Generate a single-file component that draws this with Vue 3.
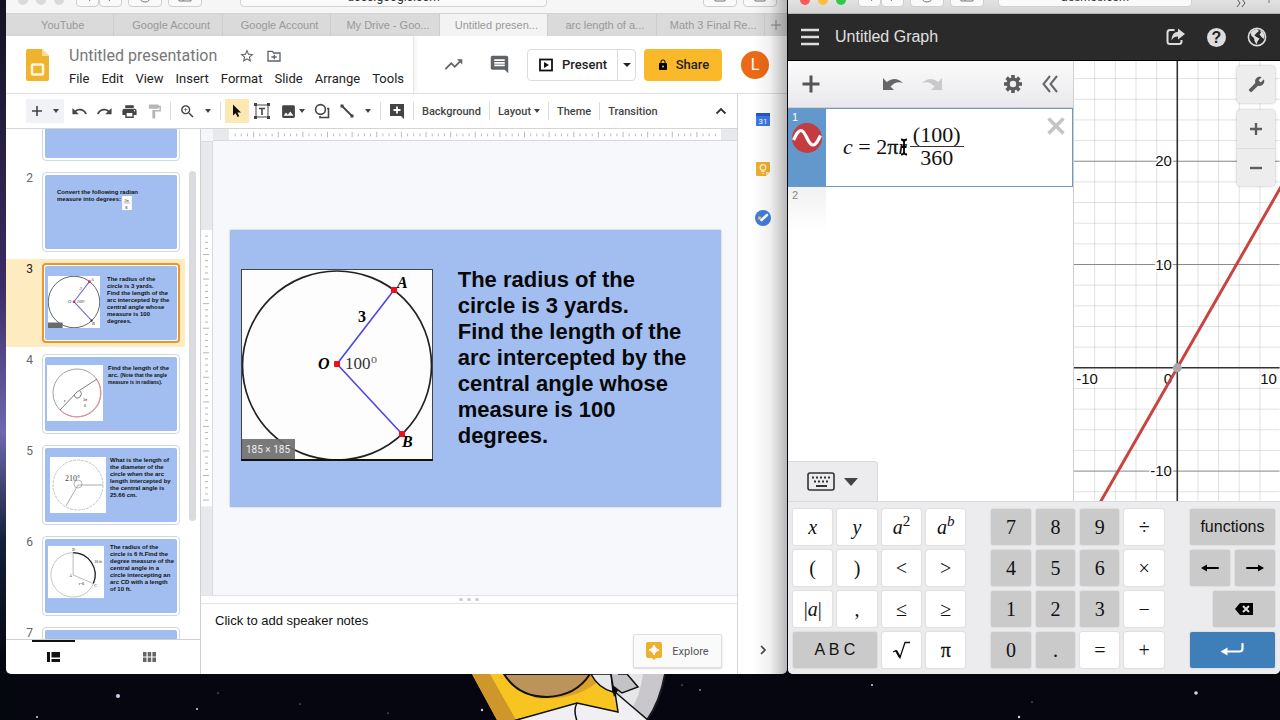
<template>
  <div class="desktop">
    <svg class="wallpaper" viewBox="0 0 1280 46" preserveAspectRatio="xMidYMax slice" aria-hidden="true">
      <g fill="#cfd3f2">
        <circle v-for="(s, i) in stars" :key="i" :cx="s[0]" :cy="s[1]" :r="s[2]" />
      </g>
      <path d="M628 0H665Q660 28 647 46H600Z" fill="#c9c7cb" />
      <path d="M628 0H643Q640 22 632 34L620 20Z" fill="#e6e5e8" />
      <path d="M665 0Q660 28 647 46" fill="none" stroke="#1b1b1e" stroke-width="2" />
      <path d="M472 0H600L613 19L618 38L577 30L514 46H497Z" fill="#f8c520" />
      <path d="M472 0H490L516 46H497Z" fill="#cf962b" />
      <path d="M590 0L600 6Q575 28 535 24L504 0Z" fill="#dba128" />
      <path d="M504 0Q518 23 547 23Q576 22 590 0Z" fill="#bd935c" stroke="#111" stroke-width="2" />
      <path d="M591 0Q598 14 613 18L611 0Z" fill="#e9e9ec" stroke="#111" stroke-width="1.500" />
      <path d="M618 0H627L638 13L622 19L613 12L611 0" fill="#c4c3c8" stroke="#111" stroke-width="1.500" />
      <path d="M513 47L577 29L618 38L615 18L649 47Z" fill="#f0eff3" stroke="#111" stroke-width="1.500" />
      <path d="M577 30L615 37L613 18L596 14Q585 26 514 46Z" fill="#f8c520" fill-opacity="0" />
      <path d="M577 29Q573 36 577 47" fill="none" stroke="#111" stroke-width="1.500" />
    </svg>

    <section class="window docs">
      <div class="chrome light">
        <span class="dots"><i></i><i></i><i></i></span>
        <span class="chrome-btn half"><svg viewBox="0 0 8 12" width="8" height="12"><path d="M6 1L2 6L6 11" /></svg></span>
        <span class="chrome-btn half"><svg viewBox="0 0 8 12" width="8" height="12"><path d="M2 1L6 6L2 11" /></svg></span>
        <span class="chrome-btn"><svg viewBox="0 0 14 14" width="14" height="14"><circle cx="7" cy="7" r="6" /></svg></span>
        <span class="chrome-btn"><svg viewBox="0 0 14 12" width="14" height="12"><path d="M1 1H13V11H1ZM5 1V11" /></svg></span>
        <span class="address">docs.google.com</span>
        <span class="chrome-btn"><svg viewBox="0 0 12 12" width="12" height="12"><path d="M1 1H11V11H1Z" /></svg></span>
        <span class="chrome-btn"><svg viewBox="0 0 12 12" width="12" height="12"><path d="M1 1H11V11H1Z" /></svg></span>
      </div>
      <nav class="tabs">
        <a v-for="tab in tabs" :key="tab.id" href="#" class="tab" :class="{ active: tab.active }">{{ tab.label }}</a>
        <button class="tab-add" aria-label="New tab"><svg viewBox="0 0 10 10" width="10" height="10"><path d="M5 0V10M0 5H10" stroke="#888" /></svg></button>
      </nav>

      <header class="docs-header">
        <div class="docs-title">
          <svg class="slides-logo" viewBox="0 0 23 32">
            <path d="M2 0H16L23 7V30Q23 32 21 32H2Q0 32 0 30V2Q0 0 2 0Z" fill="#f0b32d" />
            <path d="M16 0L23 7H16Z" fill="#f9dc9a" />
            <rect x="6" y="15.500" width="11" height="10" rx="1" fill="none" stroke="#fff6dd" stroke-width="2.500" />
          </svg>
          <div>
            <div class="name-row">
              <h1>Untitled presentation</h1>
              <svg class="icon sm" viewBox="0 0 24 24"><path :d="icons.star" /></svg>
              <svg class="icon sm" viewBox="0 0 24 24">
                <path d="M3 5H9.500L11.500 7.500H21V19.500H3Z" fill="none" stroke="currentColor" stroke-width="2" />
                <path d="M8 13.500H16M12.500 10V17" fill="none" stroke="currentColor" stroke-width="2" />
              </svg>
            </div>
            <nav class="menu">
              <a v-for="item in menu" :key="item" href="#">{{ item }}</a>
            </nav>
          </div>
        </div>
        <div class="docs-actions">
          <svg class="icon trend" viewBox="0 0 24 24"><path :d="icons.trend" /></svg>
          <svg class="icon" viewBox="0 0 24 24"><path :d="icons.comment" /></svg>
          <div class="present">
            <button class="present-main">
              <svg viewBox="0 0 14 14" width="14" height="14">
                <rect x="1" y="1.500" width="12" height="11" fill="none" stroke="#111" stroke-width="1.800" />
                <path d="M5 4L10 7L5 10Z" fill="#111" />
              </svg>
              Present
            </button>
            <button class="present-more" aria-label="Present options"><i class="caret"></i></button>
          </div>
          <button class="share">
            <svg viewBox="0 0 24 24" width="12" height="12"><path :d="icons.lock" /></svg>
            Share
          </button>
          <span class="avatar">L</span>
        </div>
      </header>

      <div class="docs-body">
        <div class="workspace">
          <div class="toolbar">
            <button class="tool new" aria-label="New slide">
              <svg viewBox="0 0 12 12" width="12" height="12"><path d="M6 1V11M1 6H11" stroke="#444" stroke-width="1.600" /></svg>
              <i class="caret"></i>
            </button>
            <button class="tool" aria-label="Undo"><svg class="icon" viewBox="0 0 24 24"><path :d="icons.undo" /></svg></button>
            <button class="tool" aria-label="Redo"><svg class="icon" viewBox="0 0 24 24"><path :d="icons.redo" /></svg></button>
            <button class="tool" aria-label="Print"><svg class="icon" viewBox="0 0 24 24"><path :d="icons.print" /></svg></button>
            <button class="tool faded" aria-label="Paint format"><svg class="icon sm" viewBox="0 0 24 24"><path :d="icons.paint" /></svg></button>
            <i class="sep"></i>
            <button class="tool" aria-label="Zoom"><svg class="icon" viewBox="0 0 24 24"><path :d="icons.zoom" /></svg></button>
            <button class="tool slim" aria-label="Zoom options"><i class="caret"></i></button>
            <i class="sep"></i>
            <button class="tool selected" aria-label="Select">
              <svg viewBox="0 0 10 14" width="10" height="14"><path d="M1 0.500V11.500L3.600 9.200L5.500 13L7.200 12.200L5.500 8.500H9Z" fill="#111" /></svg>
            </button>
            <button class="tool" aria-label="Text box">
              <svg viewBox="0 0 16 16" width="16" height="16">
                <rect x="2" y="2" width="12" height="12" fill="none" stroke="#444" />
                <path d="M5 5.500H11M8 5.500V12" stroke="#444" stroke-width="1.600" />
                <path d="M0 0H3V3H0ZM13 0H16V3H13ZM0 13H3V16H0ZM13 13H16V16H13Z" fill="#444" />
              </svg>
            </button>
            <button class="tool pair" aria-label="Image">
              <svg class="icon" viewBox="0 0 24 24"><path :d="icons.image" /></svg>
              <i class="caret"></i>
            </button>
            <button class="tool" aria-label="Shape">
              <svg viewBox="0 0 16 16" width="16" height="16" fill="none" stroke="#444" stroke-width="1.600">
                <circle cx="6.500" cy="6.500" r="4.900" />
                <path d="M13 5.500H14.500V14.500H6V13" />
              </svg>
            </button>
            <button class="tool" aria-label="Line">
              <svg viewBox="0 0 16 16" width="16" height="16"><path d="M3 3L13 13" stroke="#444" stroke-width="1.800" /><path d="M1.500 1.500H4.500V4.500H1.500ZM11.500 11.500H14.500V14.500H11.500Z" fill="#444" /></svg>
            </button>
            <button class="tool slim" aria-label="Line options"><i class="caret"></i></button>
            <i class="sep"></i>
            <button class="tool" aria-label="Add comment">
              <svg viewBox="0 0 16 16" width="16" height="16"><path d="M1 1H15V16L12 13H1Z" fill="#444" /><path d="M8 3.500V10.500M4.500 7H11.500" stroke="#fff" stroke-width="1.800" /></svg>
            </button>
            <template v-for="label in textTools" :key="label">
              <i class="sep"></i>
              <button class="tool text">{{ label }}<i v-if="label === 'Layout'" class="caret"></i></button>
            </template>
            <button class="tool collapse" aria-label="Hide menus">
              <svg viewBox="0 0 12 8" width="12" height="8"><path d="M1.500 6.500L6 2L10.500 6.500" fill="none" stroke="#333" stroke-width="1.800" /></svg>
            </button>
          </div>

          <div class="editor">
            <aside class="filmstrip">
              <div class="film-scroll">
                <ol class="films">
                  <li v-for="s in slides" :key="s.n" :class="{ current: s.n === 3 }">
                    <span class="num">{{ s.n > 1 ? s.n : '' }}</span>
                    <div class="thumb">
                      <div class="thumb-page" :class="'page-' + s.n">
                        <svg v-if="s.n === 3" class="fig" viewBox="0 0 192 192">
                          <rect width="192" height="192" fill="#fff" />
                          <circle cx="96" cy="96" r="95" fill="none" stroke="#444" stroke-width="3" />
                          <path d="M153 21L96 95L161 165" fill="none" stroke="#7a6de0" stroke-width="4" />
                          <path d="M0 172H54V192H0Z" fill="#6a6a6a" />
                          <circle cx="153" cy="21" r="5" fill="#c33" /><circle cx="96" cy="95" r="5" fill="#c33" /><circle cx="161" cy="165" r="4" fill="#333" />
                          <g class="fig-mini"><text x="158" y="18">A</text><text x="116" y="52">3</text><text x="74" y="101">O</text><text x="106" y="101">100°</text><text x="162" y="180">B</text></g>
                        </svg>
                        <svg v-else-if="s.n === 4" class="fig" viewBox="0 0 56 56">
                          <rect width="56" height="56" fill="#fff" />
                          <circle cx="30" cy="28" r="24" fill="none" stroke="#777" stroke-width="0.700" />
                          <path d="M50 15A24 24 0 0 1 13 45" fill="none" stroke="#ec8c9c" stroke-width="1" />
                          <path d="M50 14L30 27L13 45M27 30Q29 35 33 32Q36 28 33 26" fill="none" stroke="#444" stroke-width="0.700" />
                          <text x="17" y="37" class="fig-tiny">r</text><text x="36" y="36" class="fig-tiny">5π</text><text x="37" y="42" class="fig-tiny">6</text>
                        </svg>
                        <svg v-else-if="s.n === 5" class="fig" viewBox="0 0 56 56">
                          <rect width="56" height="56" fill="#fff" />
                          <circle cx="28" cy="28" r="25" fill="none" stroke="#a9a9bb" stroke-width="0.700" stroke-dasharray="3 1" />
                          <path d="M53 28H28L16 49" fill="none" stroke="#888" stroke-width="0.700" />
                          <circle cx="28" cy="27" r="4" fill="none" stroke="#999" stroke-width="0.700" />
                          <text x="15" y="24" class="fig-small">210°</text>
                        </svg>
                        <svg v-else-if="s.n === 6" class="fig" viewBox="0 0 58 54">
                          <rect width="58" height="54" fill="#fff" />
                          <circle cx="26" cy="30" r="23" fill="none" stroke="#aaa" stroke-width="0.700" />
                          <path d="M26 7A23 23 0 0 1 47 39" fill="none" stroke="#222" stroke-width="1.300" />
                          <path d="M26 7V30L47 39" fill="none" stroke="#999" stroke-width="0.700" />
                          <text x="25" y="5" class="fig-tiny">D</text><text x="22" y="32" class="fig-tiny">A</text><text x="48" y="18" class="fig-tiny">10 ft</text><text x="32" y="40" class="fig-tiny">r=6</text><text x="48" y="43" class="fig-tiny">C</text>
                        </svg>
                        <p v-if="s.n === 4">Find the length of the<br>arc. <small>(Note that the angle<br>measure is in radians).</small></p>
                        <p v-else-if="s.lines">
                          <template v-for="line in s.lines" :key="line">{{ line }}<br></template>
                        </p>
                        <svg v-if="s.n === 2" class="frac-fig" viewBox="0 0 9 13">
                          <rect width="9" height="13" fill="#fff" />
                          <path d="M1.500 6.500H7.500" stroke="#777" stroke-width="0.500" />
                          <text x="2" y="5.500" class="fig-tiny">3π</text><text x="3" y="12" class="fig-tiny">8</text>
                        </svg>
                      </div>
                    </div>
                  </li>
                </ol>
                <i class="scrollbar"></i>
              </div>
              <div class="view-switch">
                <button class="on" aria-label="Filmstrip view">
                  <svg viewBox="0 0 13 10" width="13" height="10"><path d="M0 0H3V10H0ZM4.500 0H13V5.500H4.500ZM4.500 7H13V10H4.500Z" fill="#111" /></svg>
                </button>
                <button aria-label="Grid view">
                  <svg viewBox="0 0 13 10" width="13" height="10"><path d="M0 0H3.500V4.500H0ZM4.700 0H8.200V4.500H4.700ZM9.400 0H13V4.500H9.400ZM0 5.500H3.500V10H0ZM4.700 5.500H8.200V10H4.700ZM9.400 5.500H13V10H9.400Z" fill="#666" /></svg>
                </button>
              </div>
            </aside>

            <main class="canvas-area">
              <div class="stage-grid">
                <i class="corner"></i>
                <div class="ruler-h">
                  <svg viewBox="0 0 494 12" preserveAspectRatio="none">
                    <rect width="494" height="12" fill="#fff" />
                    <line v-for="t in 79" :key="t" :x1="t * 6.175" :x2="t * 6.175" :y1="t % 4 ? 5 : 3" :y2="t % 4 ? 8 : 9" stroke="#b5b7bb" />
                  </svg>
                </div>
                <div class="ruler-v">
                  <svg viewBox="0 0 11 278" preserveAspectRatio="none">
                    <rect width="11" height="278" fill="#fff" />
                    <line v-for="t in 44" :key="t" :y1="t * 6.175" :y2="t * 6.175" :x1="t % 4 ? 4 : 2" :x2="t % 4 ? 7 : 8" stroke="#b5b7bb" />
                  </svg>
                </div>
                <div class="stage">
                  <article class="slide">
                    <figure>
                      <svg viewBox="0 0 192 192">
                        <rect width="192" height="192" fill="#fdfdfe" />
                        <circle cx="96" cy="96.500" r="94.500" fill="none" stroke="#222" stroke-width="1.700" />
                        <path d="M153 21L96 95L161 165" fill="none" stroke="#4d48e0" stroke-width="1.600" />
                        <path d="M0 170H54V190H0Z" fill="#6f6f6f" fill-opacity="0.92" />
                        <rect x="0.500" y="0.500" width="191" height="191" fill="none" stroke="#444" />
                        <path d="M0 191H192" stroke="#111" stroke-width="2" />
                        <rect x="150" y="18" width="6" height="6" rx="1" fill="#ef0f16" />
                        <rect x="93" y="92" width="6" height="6" rx="1" fill="#ef0f16" />
                        <rect x="158" y="162" width="6" height="6" rx="1" fill="#ef0f16" />
                        <g class="fig-label">
                          <text x="156" y="19">A</text>
                          <text x="77" y="100">O</text>
                          <text x="161" y="178">B</text>
                        </g>
                        <text x="117" y="53" class="fig-three">3</text>
                        <text x="104" y="100" class="fig-deg">100</text>
                        <text x="130" y="94" class="fig-o">o</text>
                        <text x="5" y="184" class="fig-size">185 × 185</text>
                      </svg>
                    </figure>
                    <p>The radius of the<br>circle is 3 yards.<br>Find the length of the<br>arc intercepted by the<br>central angle whose<br>measure is 100<br>degrees.</p>
                  </article>
                </div>
              </div>
              <div class="splitter"><i></i><i></i><i></i></div>
              <div class="notes">
                <p>Click to add speaker notes</p>
                <button class="explore">
                  <svg viewBox="0 0 16 18" width="16" height="18">
                    <path d="M2 0H14Q16 0 16 2V14Q16 16 14 16H10L8 18L6 16H2Q0 16 0 14V2Q0 0 2 0Z" fill="#eeb02f" />
                    <path d="M8 3Q8.800 7.200 13 8Q8.800 8.800 8 13Q7.200 8.800 3 8Q7.200 7.200 8 3Z" fill="#fff" stroke="#fff" />
                  </svg>
                  Explore
                </button>
              </div>
            </main>
          </div>
        </div>

        <aside class="side-panel">
          <svg viewBox="0 0 16 16" width="16" height="16">
            <rect x="1" y="2" width="14" height="12" fill="#3b78e7" /><rect x="1" y="1" width="14" height="3" fill="#2a56c6" />
            <text x="3.500" y="12" class="cal-text">31</text>
          </svg>
          <svg viewBox="0 0 16 16" width="16" height="16">
            <path d="M2 1H14Q15 1 15 2V11L11 15H2Q1 15 1 14V2Q1 1 2 1Z" fill="#eeb02f" />
            <path d="M15 11L11 15V11Z" fill="#fbe3a4" />
            <circle cx="8" cy="6.500" r="2.800" fill="none" stroke="#fff3cf" stroke-width="1.200" /><path d="M6.500 10.500H9.500M7 12.300H9" stroke="#fff3cf" />
          </svg>
          <svg viewBox="0 0 16 16" width="16" height="16">
            <circle cx="8" cy="8" r="8" fill="#3f7de0" />
            <circle cx="4.500" cy="8" r="1.700" fill="#f0c14a" /><path d="M6.500 10L12 5" stroke="#fff" stroke-width="2.600" stroke-linecap="round" />
          </svg>
          <button class="panel-open" aria-label="Show side panel">
            <svg viewBox="0 0 8 12" width="8" height="12"><path d="M2 2L6 6L2 10" fill="none" stroke="#444" stroke-width="1.600" /></svg>
          </button>
        </aside>
      </div>
    </section>

    <section class="window desmos">
      <div class="chrome">
        <span class="dots colored"><i></i><i></i><i></i></span>
        <span class="chrome-btn half"><svg viewBox="0 0 8 12" width="8" height="12"><path d="M6 1L2 6L6 11" /></svg></span>
        <span class="chrome-btn half"><svg viewBox="0 0 8 12" width="8" height="12"><path d="M2 1L6 6L2 11" /></svg></span>
        <span class="chrome-btn"><svg viewBox="0 0 14 14" width="14" height="14"><circle cx="7" cy="7" r="6" /></svg></span>
        <span class="chrome-btn"><svg viewBox="0 0 14 12" width="14" height="12"><path d="M1 1H13V11H1ZM5 1V11" /></svg></span>
        <span class="address">desmos.com</span>
        <svg class="more" viewBox="0 0 10 8" width="10" height="8"><path d="M1 0L4 4L1 8M6 0L9 4L6 8" fill="none" stroke="#555" /></svg>
        <button class="tab-add" aria-label="New tab"><svg viewBox="0 0 10 10" width="10" height="10"><path d="M5 0V10M0 5H10" stroke="#777" /></svg></button>
      </div>
      <header class="desmos-header">
        <button aria-label="Menu"><svg viewBox="0 0 18 18" width="18" height="18"><path d="M0 2H18M0 9H18M0 16H18" stroke="#ddd" stroke-width="2.400" /></svg></button>
        <h2>Untitled Graph</h2>
        <button aria-label="Share">
          <svg viewBox="0 0 20 18" width="20" height="18"><path d="M8.500 2H4Q1.500 2 1.500 4.500V13.500Q1.500 16 4 16H13Q15.500 16 15.500 13.500V12" fill="none" stroke="#ddd" stroke-width="2" /><path d="M12 0.500L19 6L12 11.500V8.500Q7.500 8.300 5.500 12.500Q5.500 4.500 12 3.800Z" fill="#ddd" /></svg>
        </button>
        <button aria-label="Help"><span class="help">?</span></button>
        <button aria-label="Language">
          <svg viewBox="0 0 20 20" width="20" height="20"><circle cx="10" cy="10" r="8.600" fill="none" stroke="#ddd" stroke-width="1.600" /><path d="M5.500 3.500L10 2L12 4L9 6.500L7.500 8.500L9.500 10L12.500 11.500L10.500 14.500L9.500 17.500L7.500 14L7 11L4.500 9L3.500 6ZM12.500 3L16 5L17.500 8.500L17 12L14.500 10L12.500 7.500L14 5.500Z" fill="#ddd" /></svg>
        </button>
      </header>

      <div class="desmos-body">
        <div class="expressions">
          <div class="expr-bar">
            <button aria-label="Add item"><svg viewBox="0 0 18 18" width="18" height="18"><path d="M9 0.500V17.500M0.500 9H17.500" stroke="#555" stroke-width="3" /></svg></button>
            <span class="history">
              <button aria-label="Undo"><svg viewBox="0 0 22 14" width="22" height="14"><path d="M1 1V13H12L8.500 9.500Q14 3.500 21 6Q13-1.500 4.700 5Z" fill="#666" /></svg></button>
              <button aria-label="Redo"><svg viewBox="0 0 22 14" width="22" height="14"><path d="M21 1V13H10L13.500 9.500Q8 3.500 1 6Q9-1.500 17.300 5Z" fill="#c9c9cc" /></svg></button>
            </span>
            <button aria-label="Edit list">
              <svg viewBox="0 0 18 18" width="18" height="18">
                <path v-for="a in 4" :key="a" d="M9 0V18" stroke="#5c5c5c" stroke-width="3.600" :transform="`rotate(${a * 45} 9 9)`" />
                <circle cx="9" cy="9" r="6.500" fill="#5c5c5c" /><circle cx="9" cy="9" r="3.200" fill="#f0f0f2" />
              </svg>
            </button>
            <button aria-label="Hide list"><svg viewBox="0 0 16 18" width="16" height="18"><path d="M8 1L1.500 9L8 17M15 1L8.500 9L15 17" fill="none" stroke="#666" stroke-width="2" /></svg></button>
          </div>
          <div class="expr active">
            <div class="expr-tab">
              <span>1</span>
              <svg viewBox="0 0 30 30" width="30" height="30"><circle cx="15" cy="15" r="15" fill="#c43c3f" /><path d="M1.500 17C4 12 6 7.500 9 7.500C14 7.500 15.500 22 21 22C24.500 22 26 17 28.500 12.500" fill="none" stroke="#fff" stroke-width="3.200" /></svg>
            </div>
            <div class="formula">
              <span class="math"><i>c</i> = 2<b>π</b><i>r</i></span>
              <svg class="ibeam" viewBox="0 0 8 18" width="8" height="18"><path d="M1 1.500Q4 1.500 4 4V14Q4 16.500 1 16.500M7 1.500Q4 1.500 4 4V14Q4 16.500 7 16.500M1.500 9H6.500" fill="none" stroke="#000" stroke-width="1.800" /></svg>
              <span class="frac"><span>(100)</span><span>360</span></span>
            </div>
            <button class="delete" aria-label="Delete"><svg viewBox="0 0 18 18" width="18" height="18"><path d="M1.500 1.500L16.500 16.500M16.500 1.500L1.500 16.500" stroke="#c2c4c6" stroke-width="3.400" /></svg></button>
          </div>
          <div class="expr next"><div class="expr-tab"><span>2</span></div></div>
          <button class="pad-toggle" aria-label="Toggle keypad">
            <svg viewBox="0 0 28 19" width="28" height="19">
              <rect x="1" y="1" width="26" height="17" rx="2" fill="none" stroke="#333" stroke-width="1.600" />
              <path d="M5 5.500H24M7 9.500H22" stroke="#333" stroke-width="2" stroke-dasharray="2 2" />
              <path d="M9 14H20" stroke="#333" stroke-width="2" />
            </svg>
            <svg viewBox="0 0 14 8" width="14" height="8"><path d="M0 0H14L7 8Z" fill="#444" /></svg>
          </button>
        </div>

        <div class="graph">
          <svg class="plot" viewBox="0 0 206 441" preserveAspectRatio="xMidYMid slice">
            <g stroke="#000" stroke-opacity="0.12">
              <line v-for="x in minorX" :key="'x' + x" :x1="px(x)" :x2="px(x)" y1="0" y2="441" />
              <line v-for="y in minorY" :key="'y' + y" x1="0" x2="206" :y1="py(y)" :y2="py(y)" />
            </g>
            <g stroke="#888">
              <line v-for="y in [20, 10, -10]" :key="y" x1="0" x2="206" :y1="py(y)" :y2="py(y)" />
            </g>
            <path :d="`M${px(0)} 0V441M0 ${py(0)}H206`" stroke="#333" stroke-width="1.600" />
            <g class="tick-label">
              <text v-for="y in [20, 10, -10]" :key="y" x="98" :y="py(y) + 5" text-anchor="end">{{ y }}</text>
              <text x="13" y="324" text-anchor="middle">-10</text>
              <text x="94" y="324" text-anchor="middle">0</text>
              <text x="195" y="324" text-anchor="middle">10</text>
            </g>
            <line :x1="px(-10)" :x2="px(11)" :y1="py(-10 * slope)" :y2="py(11 * slope)" stroke="#c74440" stroke-width="3" />
            <circle :cx="px(0)" :cy="py(0)" r="4.500" fill="#a9a9a9" />
          </svg>
          <div class="graph-tools">
            <button aria-label="Graph settings"><svg class="wrench" viewBox="0 0 24 24" width="17" height="17"><path :d="icons.wrench" fill="#5c5c5c" /></svg></button>
            <div class="zoom">
              <button aria-label="Zoom in"><svg viewBox="0 0 12 12" width="12" height="12"><path d="M6 0V12M0 6H12" stroke="#5c5c5c" stroke-width="2.400" /></svg></button>
              <button aria-label="Zoom out"><svg viewBox="0 0 12 12" width="12" height="12"><path d="M0 6H12" stroke="#5c5c5c" stroke-width="2.400" /></svg></button>
            </div>
          </div>
        </div>
      </div>

      <div class="keypad">
        <div class="keys vars">
          <button><i>x</i></button>
          <button><i>y</i></button>
          <button><i>a</i><sup>2</sup></button>
          <button><i>a</i><sup><i>b</i></sup></button>
          <button>(</button>
          <button>)</button>
          <button>&lt;</button>
          <button>&gt;</button>
          <button>|<i>a</i>|</button>
          <button>,</button>
          <button>≤</button>
          <button>≥</button>
          <button class="gray span2 abc">A B C</button>
          <button aria-label="Square root"><svg viewBox="0 0 18 18" width="18" height="18"><path d="M1 11L4 9.500L8 16.500L13 1.500H18" fill="none" stroke="#111" stroke-width="1.300" /><path d="M4 9.500L8 16.500" stroke="#111" stroke-width="2.200" /></svg></button>
          <button><b>π</b></button>
        </div>
        <div class="keys nums">
          <button v-for="k in numKeys" :key="k" :class="{ gray: /[\d.]/.test(k) }">{{ k }}</button>
        </div>
        <div class="keys acts">
          <button class="gray span2 fn">functions</button>
          <button class="gray" aria-label="Left"><svg viewBox="0 0 18 8" width="18" height="8"><path d="M17 4H3" stroke="#000" stroke-width="2" stroke-linecap="round" /><path d="M0 4L6 0.500V7.500Z" /></svg></button>
          <button class="gray" aria-label="Right"><svg viewBox="0 0 18 8" width="18" height="8"><path d="M1 4H15" stroke="#000" stroke-width="2" stroke-linecap="round" /><path d="M18 4L12 0.500V7.500Z" /></svg></button>
          <button class="gray back" aria-label="Backspace"><svg viewBox="0 0 18 12" width="18" height="12"><path d="M5 0H18V12H5L0 6Z" /><path d="M8 3L14 9M14 3L8 9" stroke="#ddd" stroke-width="2" /></svg></button>
          <button class="enter span2" aria-label="Enter"><svg viewBox="0 0 24 14" width="24" height="14"><path d="M22.500 1V5.500Q22.500 8.500 19.500 8.500H4" fill="none" stroke="#fff" stroke-width="2.200" stroke-linecap="round" /><path d="M0.500 8.500L7.500 4.500V12.500Z" fill="#fff" /></svg></button>
        </div>
      </div>
    </section>
  </div>
</template>

<script setup>
const icons = {
  star: 'M22 9.24l-7.19-.62L12 2 9.19 8.63 2 9.24l5.46 4.73L5.82 21 12 17.27 18.18 21l-1.63-7.03L22 9.24zM12 15.4l-3.76 2.27 1-4.28-3.32-2.88 4.38-.38L12 6.1l1.71 4.04 4.38.38-3.32 2.88 1 4.28L12 15.4z',
  trend: 'M16 6l2.29 2.29-4.88 4.88-4-4L2 16.59 3.41 18l6-6 4 4 6.3-6.29L22 12V6z',
  comment: 'M21.99 4c0-1.1-.89-2-1.99-2H4c-1.1 0-2 .9-2 2v12c0 1.1.9 2 2 2h14l4 4-.01-18zM18 14H6v-2h12v2zm0-3H6V9h12v2zm0-3H6V6h12v2z',
  lock: 'M18 8h-1V6c0-2.76-2.24-5-5-5S7 3.24 7 6v2H6c-1.1 0-2 .9-2 2v10c0 1.1.9 2 2 2h12c1.1 0 2-.9 2-2V10c0-1.1-.9-2-2-2zm-6 9c-1.1 0-2-.9-2-2s.9-2 2-2 2 .9 2 2-.9 2-2 2zm3.1-9H8.900V6c0-1.71 1.39-3.1 3.1-3.1 1.71 0 3.1 1.39 3.1 3.1v2z',
  undo: 'M12.5 8c-2.65 0-5.05.99-6.9 2.6L2 7v9h9l-3.62-3.62c1.39-1.16 3.16-1.88 5.12-1.88 3.54 0 6.55 2.31 7.6 5.5l2.37-.78C21.08 11.03 17.15 8 12.5 8z',
  redo: 'M18.4 10.6C16.55 8.99 14.15 8 11.5 8c-4.65 0-8.58 3.03-9.96 7.22L3.9 16c1.05-3.19 4.05-5.5 7.6-5.5 1.95 0 3.73.72 5.12 1.88L13 16h9V7l-3.6 3.6z',
  print: 'M19 8H5c-1.66 0-3 1.34-3 3v6h4v4h12v-4h4v-6c0-1.66-1.34-3-3-3zm-3 11H8v-5h8v5zm3-7c-.55 0-1-.45-1-1s.45-1 1-1 1 .45 1 1-.45 1-1 1zm-1-9H6v4h12V3z',
  paint: 'M18 4V3c0-.55-.45-1-1-1H5c-.55 0-1 .45-1 1v4c0 .55.45 1 1 1h12c.55 0 1-.45 1-1V6h1v4H9v11c0 .55.45 1 1 1h2c.55 0 1-.45 1-1v-9h8V4h-3z',
  zoom: 'M15.5 14h-.79l-.28-.27C15.41 12.59 16 11.11 16 9.5 16 5.91 13.09 3 9.5 3S3 5.91 3 9.5 5.91 16 9.5 16c1.61 0 3.09-.59 4.23-1.57l.27.28v.79l5 4.99L20.49 19l-4.99-5zm-6 0C7.01 14 5 11.99 5 9.5S7.01 5 9.5 5 14 7.01 14 9.5 11.99 14 9.5 14zm2.5-4h-2v2H9v-2H7V9h2V7h1v2h2v1z',
  image: 'M21 19V5c0-1.1-.9-2-2-2H5c-1.1 0-2 .9-2 2v14c0 1.1.9 2 2 2h14c1.1 0 2-.9 2-2zM8.5 13.500l2.500 3.010L14.500 12l4.500 6H5l3.500-4.500z',
  wrench: 'M22.7 19l-9.1-9.1c.9-2.3.4-5-1.5-6.9-2-2-5-2.4-7.4-1.3L9 6 6 9 1.6 4.7C.4 7.1.9 10.1 2.9 12.1c1.9 1.9 4.6 2.4 6.9 1.5l9.1 9.1c.4.4 1 .4 1.4 0l2.3-2.3c.5-.4.5-1.1.1-1.4z'
};

const tabs = [
  { id: 1, label: 'YouTube' },
  { id: 2, label: 'Google Account' },
  { id: 3, label: 'Google Account' },
  { id: 4, label: 'My Drive - Goo...' },
  { id: 5, label: 'Untitled presen...', active: true },
  { id: 6, label: 'arc length of a...' },
  { id: 7, label: 'Math 3 Final Re...' }
];

const menu = ['File', 'Edit', 'View', 'Insert', 'Format', 'Slide', 'Arrange', 'Tools'];
const textTools = ['Background', 'Layout', 'Theme', 'Transition'];

const slides = [
  { n: 1 },
  { n: 2, lines: ['Convert the following radian', 'measure into degrees:'] },
  { n: 3, lines: ['The radius of the', 'circle is 3 yards.', 'Find the length of the', 'arc intercepted by the', 'central angle whose', 'measure is 100', 'degrees.'] },
  { n: 4 },
  { n: 5, lines: ['What is the length of', 'the diameter of the', 'circle when the arc', 'length intercepted by', 'the central angle is', '25.66 cm.'] },
  { n: 6, lines: ['The radius of the', 'circle is 6 ft.Find the', 'degree measure of the', 'central angle in a', 'circle intercepting an', 'arc CD with a length', 'of 10 ft.'] },
  { n: 7 }
];

const numKeys = ['7', '8', '9', '÷', '4', '5', '6', '×', '1', '2', '3', '−', '0', '.', '=', '+'];

// x, y, radius
const stars = [
  [118, 22, 2], [197, 35, 1], [37, 43, 1], [218, 19, 0.6], [300, 30, 0.6], [388, 39, 0.6], [482, 36, 1.2],
  [700, 16, 0.8], [682, 11, 0.6], [872, 11, 1], [1019, 43, 1.2], [1032, 28, 0.6], [1196, 19, 1.8]
];

// graph units to plot coordinates
const slope = 2 * Math.PI * 100 / 360;
const px = x => 103.5 + x * 10.35;
const py = y => 307.5 - y * 10.35;
const minorX = [-8, -6, -4, -2, 2, 4, 6, 8];
const minorY = [28, 26, 24, 22, 18, 16, 14, 12, 8, 6, 4, 2, -2, -4, -6, -8, -12];
</script>

<style>
body {
  margin: 0;
  background: #05060f;
}
</style>

<style scoped>
* {
  box-sizing: border-box;
}
button {
  border: none;
  background: none;
  padding: 0;
  margin: 0;
  font: inherit;
  color: inherit;
  display: flex;
  align-items: center;
  justify-content: center;
}
a {
  color: inherit;
  text-decoration: none;
}
.desktop {
  position: relative;
  display: grid;
  grid-template-columns: 781fr 492fr;
  gap: 1px;
  height: 100vh;
  min-height: 600px;
  padding: 0 0 46px 6px;
  overflow: hidden;
  background: linear-gradient(#14121f, #3b2c66 40%, #6f68b0 60%, #15203a 75%, #05070f 92%) 0 0 / 6px 100% no-repeat, #05060f;
  font-family: Roboto, "Liberation Sans", sans-serif;
}
.wallpaper {
  position: absolute;
  left: 0;
  bottom: 0;
  width: 100%;
  height: 46px;
}
.window {
  position: relative;
  display: flex;
  flex-direction: column;
  min-width: 0;
  min-height: 0;
  overflow: hidden;
  border-radius: 0 0 5px 5px;
  background: #fff;
}
/* shade cast by the window in front */
.docs::after {
  content: '';
  position: absolute;
  top: 0;
  right: 0;
  bottom: 0;
  width: 34px;
  background: linear-gradient(90deg, transparent, rgba(0, 0, 0, 0.06) 50%, rgba(0, 0, 0, 0.28));
  pointer-events: none;
}

/* Browser chrome, cut off by the screen edge */
.chrome {
  display: flex;
  flex: none;
  align-items: flex-end;
  height: 14px;
  padding: 0 0 6px 12px;
  overflow: hidden;
  background: linear-gradient(#e2e2e2, #d4d4d4);
  border-bottom: 1px solid #b5b5b5;
}
.chrome.light {
  padding-right: 10px;
  background: #f6f6f6;
  border-bottom-color: #d2d2d2;
}
.dots {
  display: flex;
  gap: 8px;
  height: 12px;
  margin-right: 12px;
}
.dots i {
  width: 10px;
  height: 10px;
  border-radius: 50%;
  background: #dadada;
}
.colored i:nth-child(1) { background: #fc5b57; }
.colored i:nth-child(2) { background: #fdbd3e; }
.colored i:nth-child(3) { background: #34c84a; }
.chrome-btn {
  display: flex;
  align-items: center;
  justify-content: center;
  width: 34px;
  height: 22px;
  margin-left: 6px;
  border: 1px solid #cfcfcf;
  border-radius: 4px;
  background: #fafafa;
}
.chrome-btn.half {
  width: 23px;
  margin-left: 0;
}
.chrome-btn svg {
  fill: none;
  stroke: #777;
}
.address {
  flex: 1;
  height: 22px;
  border: 1px solid #d2d2d2;
  border-radius: 4px;
  background: #fafafa;
  font-size: 12px;
  line-height: 22px;
  text-align: center;
  color: #333;
}
.light .address {
  margin: 0 150px 0 38px;
}
.tabs {
  display: flex;
  flex: none;
  height: 22px;
  background: #dadada;
  color: #999;
  font: 11px/22px "Liberation Sans", Arial, sans-serif;
}
.tab {
  flex: 1;
  padding-left: 6px;
  border-right: 1px solid #cdcdcd;
  text-align: center;
  white-space: nowrap;
}
.tab.active {
  background: #f3f3f3;
}
.tab-add {
  width: 22px;
}

/* Presentation header */
.docs-header {
  display: flex;
  flex: none;
  justify-content: space-between;
  height: 57px;
  background: #fff;
}
.docs-title {
  display: flex;
  gap: 20px;
  width: 408px;
  padding: 8px 0 0 20px;
  border-right: 1px solid #e6e6e6;
  box-shadow: 2px 0 4px rgba(0, 0, 0, 0.05);
}
.slides-logo {
  width: 23px;
  height: 32px;
  margin-top: 5px;
}
.name-row {
  display: flex;
  align-items: center;
  gap: 11px;
  height: 24px;
  color: #5f6368;
}
.name-row h1 {
  margin: 0 11px 0 0;
  font-size: 16px;
  line-height: 24px;
  font-weight: 400;
  color: #777;
}
.menu {
  display: flex;
  gap: 12px;
  font-size: 13px;
  line-height: 22px;
  color: #222;
}
.icon {
  width: 18px;
  height: 18px;
  fill: currentColor;
}
.icon.sm {
  width: 16px;
  height: 16px;
}
.docs-actions {
  display: flex;
  align-items: center;
  gap: 8px;
  padding-right: 18px;
  color: #5f6368;
}
.docs-actions .icon {
  width: 21px;
  height: 21px;
  margin-right: 9px;
}
.docs-actions .trend {
  margin-right: 17px;
}
.present {
  display: flex;
  height: 32px;
  border: 1px solid #dadce0;
  border-radius: 4px;
  color: #222;
  font-size: 13px;
  font-weight: 500;
}
.present-main {
  gap: 9px;
  padding: 0 10px 0 11px;
}
.present-more {
  width: 18px;
  border-left: 1px solid #dadce0;
}
.share {
  gap: 7px;
  width: 78px;
  height: 32px;
  border-radius: 4px;
  background: #f9b928;
  color: #222;
  font-size: 13px;
  font-weight: 500;
}
.avatar {
  width: 28px;
  height: 28px;
  margin-left: 11px;
  border-radius: 50%;
  background: #ec6a17;
  color: #fff;
  font-size: 16px;
  line-height: 28px;
  text-align: center;
}
.caret {
  border: 4px solid transparent;
  border-top-color: currentColor;
  border-bottom: 0;
}

.docs-body {
  display: flex;
  flex: 1;
  min-height: 0;
}
.workspace {
  display: flex;
  flex: 1;
  flex-direction: column;
  min-width: 0;
}
.toolbar {
  display: flex;
  flex: none;
  align-items: center;
  gap: 1px;
  height: 36px;
  padding: 0 4px 0 20px;
  border-top: 1px solid #e0e0e0;
  border-bottom: 1px solid #d5d5d5;
  color: #444;
}
.tool {
  flex: none;
  width: 24px;
  height: 24px;
}
.tool .icon {
  width: 17px;
  height: 17px;
}
.tool .caret {
  border-width: 4px 3px 0;
}
.tool.new {
  gap: 10px;
  width: 38px;
  margin-right: 2px;
  background: #f0f2f6;
}
.tool.faded { color: #b5b5b5; }
.tool.slim { width: 16px; }
.tool.pair { width: 34px; gap: 2px; }
.tool.selected { background: #fde8b3; }
.tool.text {
  width: auto;
  gap: 3px;
  padding: 0 4px;
  font-size: 11px;
  font-weight: 500;
}
.tool.collapse { margin-left: auto; }
.sep {
  width: 1px;
  height: 18px;
  margin: 0 3px;
  background: #dcdcdc;
}

.editor {
  display: flex;
  flex: 1;
  min-height: 0;
}
.filmstrip {
  display: flex;
  flex: none;
  flex-direction: column;
  width: 195px;
  border-right: 1px solid #cfcfcf;
}
.film-scroll {
  position: relative;
  flex: 1;
  min-height: 0;
  overflow: hidden;
}
.films {
  margin: -52px 15px 0 0;
  padding: 0;
  list-style: none;
}
.films li {
  display: flex;
  height: 88px;
  margin-bottom: 3px;
  padding-top: 4px;
}
.films li.current {
  background: #feecc0;
}
.num {
  width: 36px;
  padding-right: 9px;
  font-size: 12px;
  line-height: 12px;
  color: #666;
  text-align: right;
}
.current .num {
  color: #222;
}
.thumb {
  width: 138px;
  height: 80px;
  padding: 2px;
  border: 1px solid #cdd8e4;
  border-radius: 4px;
  background: #fff;
}
.current .thumb {
  border: 2px solid #e8962e;
  padding: 1px;
}
.thumb-page {
  display: flex;
  align-items: flex-start;
  height: 74px;
  overflow: hidden;
  border-radius: 2px;
  background: #a2bef0;
}
.thumb-page p {
  margin: 0;
  color: #111;
  font: bold 6px/7px "Liberation Sans", Arial, sans-serif;
  white-space: nowrap;
}
.thumb-page small {
  font-size: 5px;
}
.fig {
  flex: none;
  width: 56px;
  height: 56px;
}
.page-2 { padding: 14px 0 0 12px; }
.page-3 { padding: 10px 0 0 3px; gap: 7px; }
.page-3 .fig { width: 52px; height: 52px; }
.page-4 { padding: 8px 0 0 2px; gap: 5px; }
.page-5 { padding: 9px 0 0 5px; gap: 4px; }
.page-6 { padding: 5px 0 0 3px; gap: 6px; }
.frac-fig {
  width: 10px;
  height: 14px;
  margin: 7px 0 0 -16px;
}
.fig-tiny { font: 4px "Liberation Serif", serif; }
.fig-small { font: 8px "Liberation Serif", serif; fill: #444; }
.fig-mini { font: italic 17px "Liberation Serif", serif; fill: #333; }
.scrollbar {
  position: absolute;
  right: 4px;
  top: 42px;
  bottom: 118px;
  width: 7px;
  border-radius: 4px;
  background: #d9dbdf;
}
.view-switch {
  display: flex;
  flex: none;
  height: 35px;
  padding: 0 0 0 26px;
  border-top: 1px solid #d0d0d0;
  gap: 53px;
}
.view-switch button {
  width: 43px;
}
.view-switch .on {
  box-shadow: inset 0 2px #111;
}

.canvas-area {
  display: flex;
  flex: 1;
  flex-direction: column;
  min-width: 0;
}
.stage-grid {
  display: grid;
  flex: 1;
  grid-template: 12px 1fr / 12px 1fr;
  min-height: 0;
}
.corner { background: #f5f6fa; }
.ruler-h, .ruler-v {
  display: flex;
  background: #e8e9ed;
}
.ruler-h {
  justify-content: center;
  border-bottom: 1px solid #d9dadd;
}
.ruler-h svg {
  width: 94%;
  height: 100%;
}
.ruler-v {
  align-items: center;
  border-right: 1px solid #d9dadd;
  border-top: 1px solid #d9dadd;
}
.ruler-v svg {
  width: 100%;
  height: 61%;
}
.stage {
  display: flex;
  align-items: center;
  justify-content: center;
  min-width: 0;
  padding: 1px 0 0 1px;
  background: #f7f8fc;
}
.slide {
  display: flex;
  align-items: flex-start;
  gap: 25px;
  width: 94%;
  aspect-ratio: 16 / 9;
  padding: 39px 20px 0 11px;
  background: #a2bef0;
  box-shadow: 0 0 2px rgba(0, 0, 0, 0.25);
}
.slide figure {
  flex: none;
  width: 192px;
  height: 193px;
  margin: 0;
}
.slide p {
  margin: -2px 0 0;
  font: bold 22px/26px "Liberation Sans", Arial, sans-serif;
  color: #080808;
  white-space: nowrap;
}
.fig-label { font: italic bold 16px "Liberation Serif", serif; }
.fig-three { font: bold 16px "Liberation Serif", serif; }
.fig-deg { font: 17px "Liberation Serif", serif; fill: #333; }
.fig-o { font: 12px "Liberation Serif", serif; fill: #555; }
.fig-size { font: 10px Roboto, sans-serif; fill: #eee; }

.splitter {
  display: flex;
  flex: none;
  align-items: center;
  justify-content: center;
  gap: 4px;
  height: 9px;
  border-top: 1px solid #e3e3e6;
  border-bottom: 1px solid #e3e3e6;
}
.splitter i {
  width: 4px;
  height: 3px;
  border-radius: 2px;
  background: #cfcfd3;
}
.notes {
  display: flex;
  flex: none;
  justify-content: space-between;
  height: 70px;
  padding: 7px 15px 6px 14px;
}
.notes p {
  margin: 0;
  font: 13px/20px "Liberation Sans", Arial, sans-serif;
  color: #111;
}
.explore {
  align-self: flex-end;
  gap: 10px;
  width: 89px;
  height: 34px;
  border: 1px solid #dfdfdf;
  border-radius: 2px;
  background: #fafafa;
  box-shadow: 0 1px 2px rgba(0, 0, 0, 0.15);
  color: #555;
  font-size: 11px;
}

.side-panel {
  display: flex;
  flex: none;
  flex-direction: column;
  align-items: center;
  gap: 33px;
  width: 50px;
  padding: 18px 0;
  border-left: 1px solid #d5d5d5;
  border-top: 1px solid #e0e0e0;
}
.panel-open {
  width: 16px;
  height: 12px;
  margin-top: auto;
}
.cal-text {
  font: 8px Roboto, sans-serif;
  fill: #fff;
}

/* Graphing calculator */
.desmos {
  background: #ececee;
  font-family: "Liberation Sans", Arial, sans-serif;
}
.desmos .address {
  margin: 0 44px 0 14px;
}
.more {
  margin-right: 12px;
}
.desmos .tab-add {
  height: 18px;
}
.desmos-header {
  display: flex;
  flex: none;
  align-items: center;
  gap: 21px;
  height: 47px;
  padding: 0 13px;
  background: #2a2a2a;
  border-bottom: 1px solid #000;
  color: #e0e0e0;
}
.desmos-header h2 {
  flex: 1;
  margin: 0 0 0 -5px;
  font-size: 16px;
  font-weight: 400;
}
.help {
  width: 19px;
  height: 19px;
  border-radius: 50%;
  background: #ddd;
  color: #222;
  font-size: 16px;
  line-height: 19px;
  font-weight: bold;
}
.desmos-body {
  display: flex;
  flex: 1;
  min-height: 0;
}
.expressions {
  display: flex;
  flex: 286;
  flex-direction: column;
  min-width: 0;
  background: #fff;
  border-right: 1px solid #cfcfcf;
}
.expr-bar {
  display: flex;
  flex: none;
  align-items: center;
  gap: 20px;
  height: 47px;
  padding: 0 15px 0 14px;
  background: linear-gradient(#fbfbfb, #e9e9ed);
  border-bottom: 1px solid #d0d0d6;
}
.history {
  display: flex;
  flex: 1;
  justify-content: center;
  gap: 17px;
}
.expr {
  position: relative;
  display: flex;
  flex: none;
}
.expr-tab {
  width: 38px;
  padding: 2px 4px;
  color: #fff;
  font-size: 11px;
  line-height: 12px;
}
.expr.active {
  height: 79px;
  border: 1px solid #6a9ac4;
  border-left: none;
}
.active .expr-tab {
  background: #6298cc;
}
.active .expr-tab svg {
  display: block;
}
.next .expr-tab {
  height: 44px;
  background: linear-gradient(#f1f1f1, #fff);
  color: #888;
}
.formula {
  display: flex;
  flex: 1;
  align-items: center;
  padding: 0 0 2px 17px;
  color: #111;
  font: 22px/22px "Liberation Serif", "Times New Roman", serif;
}
.formula b, .keys b {
  font-weight: 400;
  -webkit-text-stroke: 0.3px #111;
}
.ibeam {
  margin: 0 2px 0 -7px;
}
.frac {
  display: flex;
  flex-direction: column;
  text-align: center;
}
.frac span {
  padding: 0 3px;
}
.frac span:last-child {
  border-top: 1px solid #333;
}
.delete {
  position: absolute;
  right: 7px;
  top: 8px;
}
.pad-toggle {
  align-self: flex-start;
  gap: 9px;
  width: 90px;
  height: 40px;
  margin-top: auto;
  border: 1px solid #d8d8d8;
  border-width: 1px 1px 0 0;
  border-radius: 0 4px 0 0;
  background: #ececee;
}
.graph {
  position: relative;
  flex: 206;
  min-width: 0;
  background: #fff;
}
.plot {
  display: block;
  width: 100%;
  height: 100%;
}
.tick-label {
  font: 15px "Liberation Sans", Arial, sans-serif;
  fill: #111;
  stroke: #fff;
  stroke-width: 3px;
  paint-order: stroke;
}
.graph-tools {
  position: absolute;
  top: 5px;
  right: 5px;
  display: grid;
  gap: 7px;
}
.graph-tools > button, .zoom {
  width: 38px;
  border-radius: 4px;
  background: #ededed;
  box-shadow: 0 0 3px rgba(0, 0, 0, 0.3);
}
.graph-tools > button {
  height: 37px;
}
.zoom button {
  width: 100%;
  height: 38px;
}
.zoom button + button {
  border-top: 1px solid #ddd;
}
.wrench {
  transform: scaleX(-1);
}

.keypad {
  display: flex;
  flex: none;
  justify-content: space-between;
  gap: 26px;
  padding: 7px 5px 6px;
  border-top: 1px solid #dadada;
  background: #ececee;
}
.keys {
  display: grid;
  grid-auto-rows: 36px;
  gap: 5px;
}
.vars, .nums {
  flex: 172;
  grid-template-columns: repeat(4, 1fr);
}
.acts {
  flex: 85;
  grid-template-columns: repeat(2, 1fr);
}
.keys button {
  min-width: 0;
  border-radius: 2px;
  background: #fff;
  box-shadow: 0 0 2px rgba(0, 0, 0, 0.2);
  color: #111;
  font: 20px/24px "Liberation Serif", "Times New Roman", serif;
}
.keys button.gray {
  background: #cacacb;
}
.keys sup {
  align-self: flex-start;
  margin-top: 3px;
  font-size: 15px;
  line-height: 18px;
}
.keys button.abc, .keys button.fn {
  font: 16px "Liberation Sans", Arial, sans-serif;
}
.span2 {
  grid-column: span 2;
}
.keys .back {
  grid-column: span 2;
  justify-self: end;
  width: 73%;
}
.keys button.enter {
  background: #3f7fb9;
}
</style>
